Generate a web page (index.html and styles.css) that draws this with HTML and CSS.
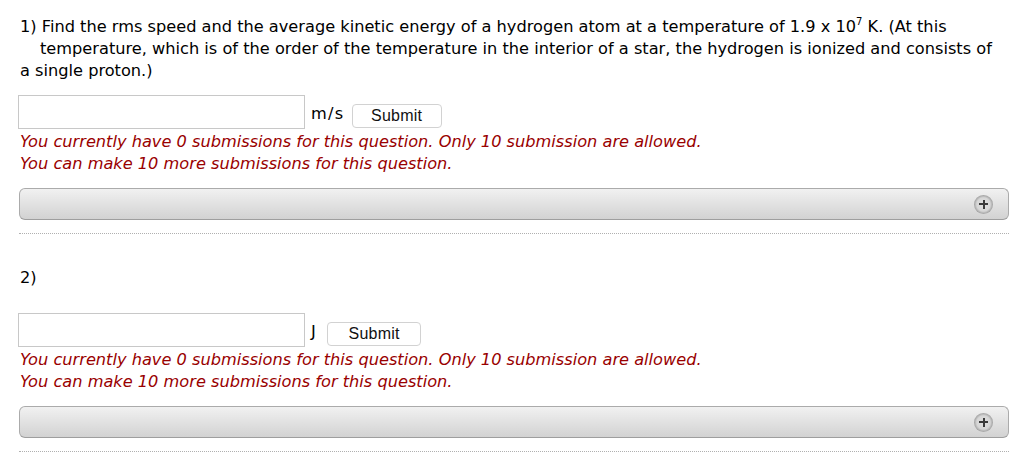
FILE: index.html
```html
<!DOCTYPE html>
<html>
<head>
<meta charset="utf-8">
<link rel="stylesheet" href="styles.css">
</head>
<body>
<div class="page">
  <section class="question">
    <div class="qtext">
      <span class="line">1) Find the rms speed and the average kinetic energy of a hydrogen atom at a temperature of 1.9 x 10<sup>7</sup> K. (At this</span>
      <span class="line indent">temperature, which is of the order of the temperature in the interior of a star, the hydrogen is ionized and consists of</span>
      <span class="line">a single proton.)</span>
    </div>
    <div class="answer">
      <input class="field" type="text">
      <span class="unit">m/s</span>
      <button class="submit">Submit</button>
    </div>
    <div class="notice">
      <div>You currently have 0 submissions for this question. Only 10 submission are allowed.</div>
      <div>You can make 10 more submissions for this question.</div>
    </div>
    <div class="bar"><span class="plus"></span></div>
    <div class="sep"></div>
  </section>
  <section class="question q2">
    <div class="qtext"><span class="line">2)</span></div>
    <div class="answer a2">
      <input class="field" type="text">
      <span class="unit">J</span>
      <button class="submit">Submit</button>
    </div>
    <div class="notice">
      <div>You currently have 0 submissions for this question. Only 10 submission are allowed.</div>
      <div>You can make 10 more submissions for this question.</div>
    </div>
    <div class="bar"><span class="plus"></span></div>
    <div class="sep"></div>
  </section>
</div>
</body>
</html>
```
FILE: styles.css
```css
html, body {
  margin: 0;
  padding: 0;
  background: #fff;
}
body {
  font-family: "DejaVu Sans", Verdana, sans-serif;
  font-size: 16.2px;
  color: #000;
}
.page {
  padding: 16px 16px 0 19px;
}
.qtext {
  line-height: 22px;
  padding-left: 1px;
}
.line {
  display: block;
  white-space: nowrap;
}
.indent {
  padding-left: 20px;
}
sup {
  font-size: 10px;
  line-height: 0;
  vertical-align: 7px;
}
.answer {
  display: flex;
  align-items: flex-end;
  margin-top: 13px;
  height: 34px;
}
.field {
  box-sizing: border-box;
  width: 287px;
  height: 34px;
  margin: 0 0 0 -1px;
  border: 1px solid #c8c8c8;
  background: #fff;
  padding: 0;
}
.unit {
  margin-left: 6px;
  line-height: 20px;
  padding-bottom: 5px;
  letter-spacing: 1.3px;
}
.submit {
  box-sizing: border-box;
  margin-left: 7px;
  margin-bottom: 1px;
  width: 90px;
  height: 24px;
  border: 1px solid #d2d2d2;
  border-radius: 4px;
  background: #fff;
  font-family: "Liberation Sans", Arial, sans-serif;
  font-size: 16px;
  color: #111;
  padding: 0;
  letter-spacing: 0.2px;
}
.a2 .unit { margin-left: 6px; }
.a2 .submit { margin-left: 10px; width: 94px; }
.notice {
  color: #990000;
  font-style: italic;
  line-height: 22px;
  margin-top: 2px;
  padding-left: 1px;
}
.bar {
  box-sizing: border-box;
  margin-top: 13px;
  height: 32px;
  width: 990px;
  border: 1px solid #ababab;
  border-bottom-color: #9e9e9e;
  border-radius: 6px;
  background: linear-gradient(#f1f1f1, #d2d2d2);
  display: flex;
  align-items: center;
  justify-content: flex-end;
  padding-right: 15px;
}
.plus {
  position: relative;
  width: 19px;
  height: 19px;
  border-radius: 50%;
  background: radial-gradient(circle, #e2e2e2 0, #d6d6d6 50%, #9c9c9c 72%, #bdbdbd 85%, #d4d4d4 100%);
}
.plus::before, .plus::after {
  content: "";
  position: absolute;
  background: #3a3a3a;
  left: 50%;
  top: 50%;
}
.plus::before {
  width: 9px;
  height: 2px;
  margin: -1px 0 0 -4.5px;
}
.plus::after {
  width: 2px;
  height: 9px;
  margin: -4.5px 0 0 -1px;
}
.sep {
  margin-top: 13px;
  width: 990px;
  border-top: 1px dotted #b0b0b0;
}
.q2 {
  margin-top: 33px;
}
.q2 .answer { margin-top: 24px; }
```
